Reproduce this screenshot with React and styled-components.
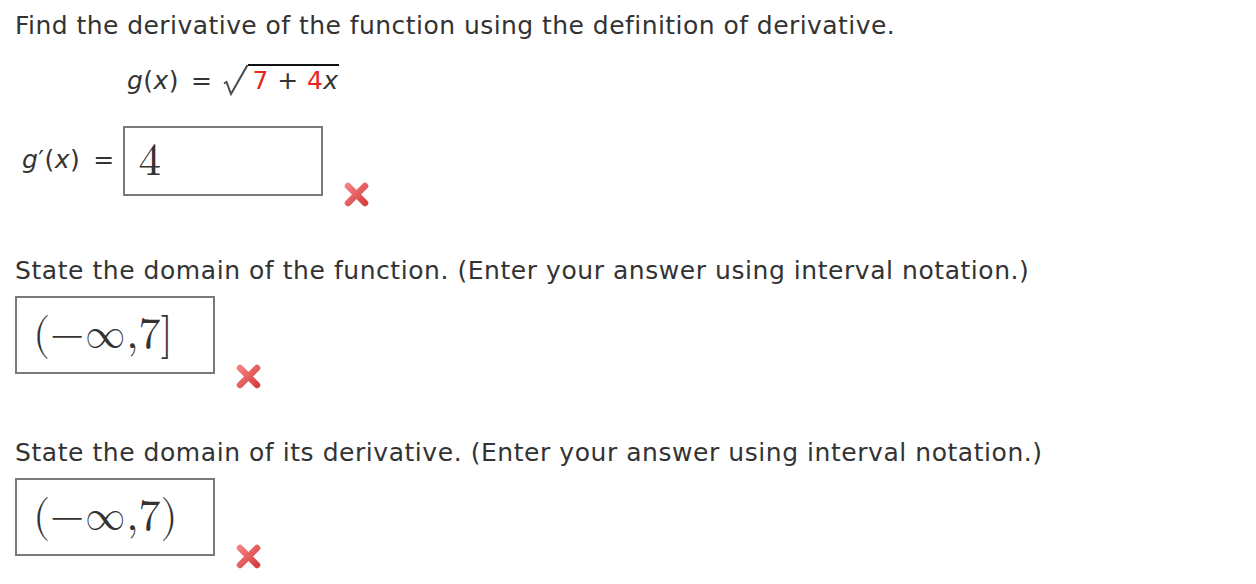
import React from "react";
import styled, { createGlobalStyle } from "styled-components";

const Global = createGlobalStyle`
  html, body { margin: 0; padding: 0; background: #fff; }
  body { font-family: "DejaVu Sans", Verdana, sans-serif; color: #333; }
`;

const Page = styled.div`
  width: 1256px;
  height: 584px;
  padding: 12px 15px 0;
  box-sizing: border-box;
  overflow: hidden;
`;

const Prompt = styled.p`
  margin: 0;
  font-size: 25px;
  letter-spacing: 0.45px;
  line-height: 28px;
  color: #333;
`;

const FormulaRow = styled.div`
  display: flex;
  align-items: baseline;
  padding-left: 112px;
  margin-top: 24px;
  font-size: 25px;
  letter-spacing: 0.45px;
  line-height: 30px;
`;

const Italic = styled.span`
  font-style: italic;
`;

const Eq = styled.span`
  margin: 0 ${(p) => p.$right}px 0 ${(p) => p.$left}px;
`;

const Radical = styled.span`
  display: inline-flex;
  align-items: baseline;
`;

const RadSign = styled.svg`
  align-self: flex-start;
  width: 25px;
  height: 32px;
  flex: none;
`;

const Radicand = styled.span`
  border-top: 2px solid #111;
  padding: 0 0 0 4px;
  line-height: 30px;
`;

const Red = styled.span`
  color: #e8261f;
`;

const AnswerRow = styled.div`
  display: flex;
  align-items: flex-start;
  margin-top: ${(p) => p.$top}px;
  padding-left: ${(p) => p.$indent || 0}px;
`;

const Label = styled.span`
  font-size: 25px;
  letter-spacing: 0.45px;
  line-height: 30px;
  margin-top: 19px;
`;

const AnswerBox = styled.div`
  width: ${(p) => p.$w}px;
  height: ${(p) => p.$h}px;
  box-sizing: border-box;
  border: 2px solid #7a7a7a;
  display: flex;
  align-items: center;
  padding-left: ${(p) => p.$pad}px;
  font-family: "Latin Modern Math", "Liberation Serif", "DejaVu Serif", serif;
  font-size: ${(p) => p.$size || 44}px;
  color: #333;
`;

const MathText = styled.span`
  line-height: 1;
  display: inline-flex;
  align-items: center;
`;

const Mark = styled.svg`
  width: 27px;
  height: 27px;
  margin-left: 20px;
  margin-top: ${(p) => p.$top}px;
  flex: none;
`;

const Question = styled.p`
  margin: 0;
  margin-top: ${(p) => p.$top}px;
  font-size: 25px;
  letter-spacing: 0.55px;
  line-height: 28px;
`;

const Infinity = styled.span`
  font-size: 40px;
  margin: 0 1px;
`;

function Cross({ top }) {
  return (
    <Mark $top={top} viewBox="0 0 27 27">
      <defs>
        <linearGradient id="xg" x1="0" y1="0" x2="1" y2="1">
          <stop offset="0" stopColor="#f27e7e" />
          <stop offset="1" stopColor="#d84040" />
        </linearGradient>
      </defs>
      <g stroke="url(#xg)" strokeWidth="6.5" strokeLinecap="round">
        <line x1="5" y1="5" x2="22" y2="22" />
        <line x1="22" y1="5" x2="5" y2="22" />
      </g>
    </Mark>
  );
}

export default function App() {
  return (
    <Page>
      <Global />
      <Prompt>Find the derivative of the function using the definition of derivative.</Prompt>
      <FormulaRow>
        <Italic>g</Italic>(<Italic>x</Italic>)
        <Eq $left={12} $right={11}>=</Eq>
        <Radical>
          <RadSign viewBox="0 0 25 32">
            <path d="M1 19.5 L3.5 18 L8 30 L24.5 1" fill="none" stroke="#4a4a4a" strokeWidth="2" strokeLinejoin="miter" />
          </RadSign>
          <Radicand>
            <Red>7</Red> + <Red>4</Red><Italic>x</Italic>
          </Radicand>
        </Radical>
      </FormulaRow>
      <AnswerRow $top={30} $indent={7}>
        <Label>
          <Italic>g</Italic>′(<Italic>x</Italic>)
        </Label>
        <Label>
          <Eq $left={13} $right={8}>=</Eq>
        </Label>
        <AnswerBox $w={200} $h={70} $pad={14} $size={45}>
          <MathText>4</MathText>
        </AnswerBox>
        <Cross top={55} />
      </AnswerRow>
      <Question $top={49}>State the domain of the function. (Enter your answer using interval notation.)</Question>
      <AnswerRow $top={11}>
        <AnswerBox $w={200} $h={78} $pad={16}>
          <MathText>(−<Infinity>∞</Infinity>,7]</MathText>
        </AnswerBox>
        <Cross top={67} />
      </AnswerRow>
      <Question $top={49}>State the domain of its derivative. (Enter your answer using interval notation.)</Question>
      <AnswerRow $top={11}>
        <AnswerBox $w={200} $h={78} $pad={16}>
          <MathText>(−<Infinity>∞</Infinity>,7)</MathText>
        </AnswerBox>
        <Cross top={65} />
      </AnswerRow>
    </Page>
  );
}
